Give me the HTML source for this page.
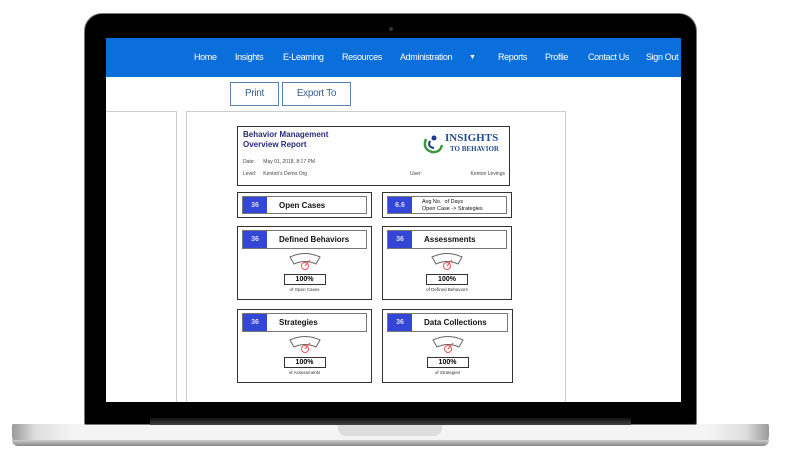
<!DOCTYPE html>
<html><head><style>
*{margin:0;padding:0;box-sizing:border-box}
body{width:791px;height:458px;background:#fff;position:relative;overflow:hidden;font-family:"Liberation Sans",Arial,sans-serif}
.a{position:absolute}
.nav span{position:absolute;top:52px;color:#fff;font-size:9px;letter-spacing:-0.35px;white-space:nowrap}
.btn{position:absolute;border:1px solid #5a7fa8;color:#3a5f8a;font-size:10px;text-align:center;line-height:22px;background:#fff;letter-spacing:-0.3px}
.card{position:absolute;border:1.5px solid #333;background:#fff}
.hd{position:absolute;left:4px;right:4px;top:3px;height:19px;border:1px solid #777;background:#fff}
.hd .n{position:absolute;left:0;top:0;bottom:0;width:24px;background:#3346d6;color:#dde;font-size:7px;font-weight:bold;text-align:center;line-height:17px}
.hd .t{position:absolute;left:36px;top:0;font-size:8px;font-weight:bold;line-height:17px;color:#111}
.g{position:absolute;left:50%;margin-left:-21px;width:42px}
.pct{position:absolute;left:50%;margin-left:-21px;width:42px;height:11px;border:1px solid #333;font-size:7px;font-weight:bold;text-align:center;line-height:9px}
.cap{position:absolute;left:0;right:0;text-align:center;font-size:4.5px;color:#333}
</style></head><body>
<div class="a" style="left:12px;top:424px;width:757px;height:22px;border-radius:2px 2px 10px 10px;background:linear-gradient(90deg,#999 0,#ddd 3%,#f4f4f4 8%,#f4f4f4 92%,#ddd 97%,#999 100%)"></div>
<div class="a" style="left:12px;top:440px;width:757px;height:6px;border-radius:0 0 10px 10px;background:linear-gradient(#ccc,#888)"></div>
<div class="a" style="left:338px;top:424px;width:104px;height:12px;border-radius:0 0 8px 8px;background:#ddd"></div>
<div class="a" style="left:84px;top:13px;width:613px;height:412px;background:#000;border-radius:18px 18px 2px 2px;border:1px solid #777"></div>
<div class="a" style="left:150px;top:418px;width:481px;height:7px;background:linear-gradient(#111,#444)"></div>
<div class="a" style="left:389px;top:27px;width:4px;height:4px;border-radius:2px;background:#333"></div>
<div class="a" style="left:106px;top:38px;width:575px;height:364px;background:#fff;overflow:hidden"></div>
<div class="a" style="left:106px;top:38px;width:575px;height:39px;background:#0b6fdb"></div>
<div class="nav">
<span style="left:194px">Home</span><span style="left:235px">Insights</span><span style="left:283px">E-Learning</span><span style="left:342px">Resources</span><span style="left:400px">Administration</span><span style="left:469px;font-size:7px;top:54px">▼</span><span style="left:498px">Reports</span><span style="left:545px">Profile</span><span style="left:588px">Contact Us</span><span style="left:646px">Sign Out</span>
</div>
<div class="btn" style="left:230px;top:82px;width:49px;height:24px">Print</div>
<div class="btn" style="left:282px;top:82px;width:69px;height:24px">Export To</div>
<div class="a" style="left:106px;top:111px;width:71px;height:291px;border-right:1px solid #ccc;border-top:1px solid #ccc"></div>
<div class="a" style="left:186px;top:111px;width:380px;height:291px;border:1px solid #ccc;border-bottom:none"></div>
<div class="card" style="left:237px;top:126px;width:273px;height:60px">
<div class="a" style="left:5px;top:3px;font-size:8px;font-weight:bold;color:#2a2a7a;line-height:10px">Behavior Management<br>Overview Report</div>
<div class="a" style="left:5px;top:32px;font-size:5px;color:#444">Date:&nbsp;&nbsp;&nbsp;&nbsp;&nbsp;&nbsp;May 01, 2018, 8:17 PM</div>
<div class="a" style="left:5px;top:44px;font-size:5px;color:#444">Level:&nbsp;&nbsp;&nbsp;&nbsp;&nbsp;Kenton's Demo Org</div>
<div class="a" style="left:172px;top:44px;font-size:5px;color:#444">User:</div>
<div class="a" style="right:4px;top:44px;font-size:5px;color:#444">Kenton Levings</div>
<svg class="a" style="left:184px;top:6px" width="22" height="22" viewBox="0 0 22 22"><path d="M4 6 Q0 16 10 19 Q18 20 20 12" fill="none" stroke="#3a9a3a" stroke-width="2.5"/><path d="M8 8 Q5 14 12 15" fill="none" stroke="#1a3a8a" stroke-width="2"/><circle cx="12" cy="5" r="2.5" fill="#1a3a8a"/></svg>
<div class="a" style="left:207px;top:5px;font-family:'Liberation Serif',serif;font-size:11px;font-weight:bold;color:#1f4f8f">INSIGHTS</div>
<div class="a" style="left:212px;top:18px;font-family:'Liberation Serif',serif;font-size:7px;font-weight:bold;color:#1f4f8f">TO BEHAVIOR</div>
</div>
<div class="card" style="left:237px;top:192px;width:135px;height:26px"><div class="hd" style="height:18px"><div class="n">36</div><div class="t" style="left:36px">Open Cases</div></div></div>
<div class="card" style="left:382px;top:192px;width:130px;height:26px"><div class="hd" style="height:18px"><div class="n">6.6</div><div class="t" style="left:34px;font-size:5.5px;font-weight:normal;line-height:7px;top:2px">Avg No.&nbsp; of Days<br>Open Case -&gt; Strategies</div></div></div>
<div class="card" style="left:237px;top:226px;width:135px;height:74px"><div class="hd"><div class="n">36</div><div class="t">Defined Behaviors</div></div>
<svg class="g" style="top:25px" width="42" height="20" viewBox="0 0 42 20"><path d="M10 12 L6 5 Q21 -2 36 5 L32 12 Q21 7 10 12Z" fill="none" stroke="#666" stroke-width="1"/><circle cx="21" cy="14" r="3.5" fill="none" stroke="#e55"/><path d="M21 14 L26 8" stroke="#e55"/></svg>
<div class="pct" style="top:47px">100%</div><div class="cap" style="top:60px">of Open Cases</div></div>
<div class="card" style="left:382px;top:226px;width:130px;height:74px"><div class="hd"><div class="n">36</div><div class="t">Assessments</div></div>
<svg class="g" style="top:25px" width="42" height="20" viewBox="0 0 42 20"><path d="M10 12 L6 5 Q21 -2 36 5 L32 12 Q21 7 10 12Z" fill="none" stroke="#666" stroke-width="1"/><circle cx="21" cy="14" r="3.5" fill="none" stroke="#e55"/><path d="M21 14 L26 8" stroke="#e55"/></svg>
<div class="pct" style="top:47px">100%</div><div class="cap" style="top:60px">of Defined Behaviors</div></div>
<div class="card" style="left:237px;top:309px;width:135px;height:74px"><div class="hd"><div class="n">36</div><div class="t">Strategies</div></div>
<svg class="g" style="top:25px" width="42" height="20" viewBox="0 0 42 20"><path d="M10 12 L6 5 Q21 -2 36 5 L32 12 Q21 7 10 12Z" fill="none" stroke="#666" stroke-width="1"/><circle cx="21" cy="14" r="3.5" fill="none" stroke="#e55"/><path d="M21 14 L26 8" stroke="#e55"/></svg>
<div class="pct" style="top:47px">100%</div><div class="cap" style="top:60px">of Assessments</div></div>
<div class="card" style="left:382px;top:309px;width:131px;height:74px"><div class="hd"><div class="n">36</div><div class="t">Data Collections</div></div>
<svg class="g" style="top:25px" width="42" height="20" viewBox="0 0 42 20"><path d="M10 12 L6 5 Q21 -2 36 5 L32 12 Q21 7 10 12Z" fill="none" stroke="#666" stroke-width="1"/><circle cx="21" cy="14" r="3.5" fill="none" stroke="#e55"/><path d="M21 14 L26 8" stroke="#e55"/></svg>
<div class="pct" style="top:47px">100%</div><div class="cap" style="top:60px">of Strategies</div></div>
</body></html>
